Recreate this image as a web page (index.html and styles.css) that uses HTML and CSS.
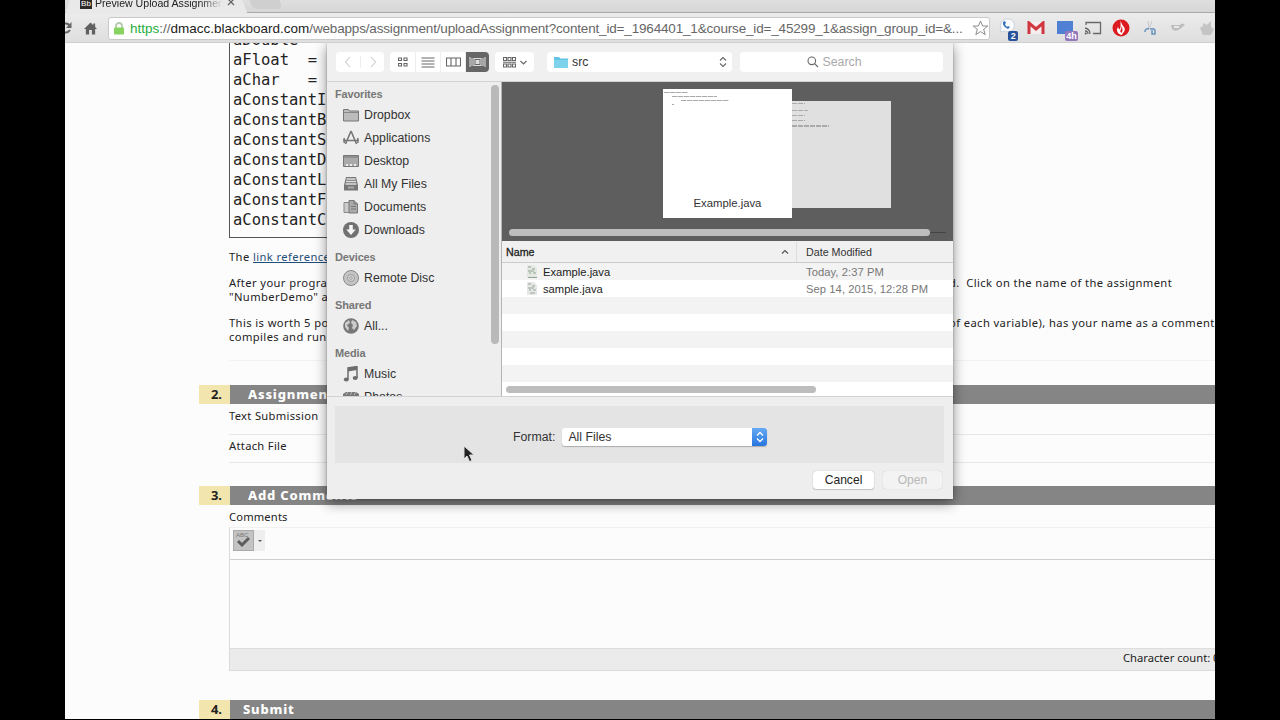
FILE: index.html
```html
<!DOCTYPE html>
<html lang="en">
<head>
  <meta charset="UTF-8" />
  <title>Preview Upload Assignment</title>
  <link rel="stylesheet" href="styles.css">
</head>
<body>
  <div class="screen">

    <!-- Browser chrome -->
    <header class="browser">
      <div class="tab-strip">
        <div class="tab">
          <span class="favicon">Bb</span>
          <span class="tab-title">Preview Upload Assignmen</span>
          <svg class="tab-close" width="8" height="8" viewBox="0 0 8 8"><path d="M1 1l6 6M7 1l-6 6"/></svg>
        </div>
        <div class="new-tab"></div>
      </div>
      <div class="toolbar">
        <svg class="reload" width="8" height="16" viewBox="0 0 8 16"><path d="M0 3.500Q4 3 5 7M0 12.500Q3 13 5 10" fill="none" stroke="#666" stroke-width="2"/><path d="M6.500 2v6H1z" fill="#666"/></svg>
        <svg class="home" width="13" height="13" viewBox="0 0 14 13"><path d="M7 0L0 7h2v6h3.500V8h3v5H12V7h2l-2-2V1h-2v2z" fill="#606060"/></svg>
        <div class="address">
          <svg class="lock" width="12" height="13" viewBox="0 0 12 13"><path d="M3 6V4a3 3 0 0 1 6 0v2" fill="none" stroke="#b5c9ac" stroke-width="1.800"/><rect x="1" y="5.500" width="10" height="7" rx="1" fill="#86d35f"/></svg>
          <span class="url"><span class="scheme">https</span>://<span class="host">dmacc.blackboard.com</span><span class="path">/webapps/assignment/uploadAssignment?content_id=_1964401_1&amp;course_id=_45299_1&amp;assign_group_id=&amp;...</span></span>
          <svg class="star" width="17" height="16" viewBox="0 0 17 16"><path d="M8.500 1l2.100 5h5.200l-4.100 3.400 1.500 5.200-4.700-3-4.700 3 1.500-5.200L1.200 6h5.200z" fill="#fff" stroke="#8b8b8b"/></svg>
        </div>
        <div class="extensions">
          <div class="ext"><svg width="20" height="20" viewBox="0 0 20 20"><path d="M8 1a7 6.500 0 1 1-2 12l-4 1 1-4A7 6.500 0 0 1 8 1z" fill="#f8fafc" stroke="#c9d2dc"/><path d="M5 4q-1 4 5 7l2-2-2-1-1 1Q7 7 7 6l1-1-1-2z" fill="#3674bd"/></svg><b class="badge">2</b></div>
          <div class="ext"><svg width="18" height="14" viewBox="0 0 18 14"><rect x="1" y="1" width="16" height="12" fill="#f6eeee"/><path d="M2 13V2l7 6 7-6v11" fill="none" stroke="#d0363d" stroke-width="3"/></svg></div>
          <div class="ext"><svg width="18" height="16" viewBox="0 0 18 16"><path d="M1 1h16v13H1z" fill="#4f80d4"/></svg><b class="badge violet">4h</b></div>
          <div class="ext"><svg width="18" height="14" viewBox="0 0 18 14"><path d="M2 4V1.500h14.500v11H9M1 7q5 1 5 6M1 10q3 0 3 3" fill="none" stroke="#696969" stroke-width="1.300"/><circle cx="1.700" cy="12.500" r="1" fill="#555"/></svg></div>
          <div class="ext"><svg width="18" height="18" viewBox="0 0 18 18"><circle cx="9" cy="9" r="8.500" fill="#dc1b20"/><path d="M8.500 2Q10 6 12 8q2 3-1 6-1 1-1 2-2 0-4-2-2-3 0-6 1 3 2 2 1-3 .5-8z" fill="#fff"/><path d="M9.500 7q2 4 0 7-2-1-1-3 1-1 1-4z" fill="#dc1b20"/></svg></div>
          <div class="ext"><svg width="14" height="16" viewBox="0 0 14 16"><path d="M5 1l1 8M9 1L6 9" stroke="#c4c8ce"/><path d="M6 9q-4-1-4 3M7 9q5-1 5 2v3H9v-4" fill="none" stroke="#6893c0" stroke-width="1.500"/></svg></div>
          <div class="ext"><svg width="16" height="12" viewBox="0 0 16 12"><path d="M1 3h9q2-3 5 0l-4 3q-5 5-9 1z" fill="#bdbdbd"/><path d="M4 4h5v2H4z" fill="#e8e8e8"/></svg></div>
          <div class="ext"><svg width="16" height="16" viewBox="0 0 16 16"><path d="M2 8l3-2V3l4 2 4-4v6l3 2-3 6H5z" fill="#c4c4c4"/></svg></div>
        </div>
      </div>
    </header>

    <!-- Assignment page -->
    <main class="page">
      <pre class="code">aDouble =
aFloat  =
aChar   =
aConstantI
aConstantB
aConstantS
aConstantD
aConstantL
aConstantF
aConstantC</pre>

      <p>The <a href="#">link referenced</a></p>
      <p>
        <span class="line"><span>After your progra</span><span class="rest">d.&nbsp; Click on the name of the assignment</span></span>
        <span class="line"><span>"NumberDemo" a</span></span>
      </p>
      <p>
        <span class="line"><span>This is worth 5 po</span><span class="rest">of each variable), has your name as a comment,</span></span>
        <span class="line"><span>compiles and run</span></span>
      </p>

      <section class="step step-submission">
        <h2><span class="num">2.</span><span class="step-title">Assignment</span></h2>
        <div class="field text-field">Text Submission</div>
        <div class="field file-field">Attach File</div>
      </section>

      <section class="step step-comments">
        <h2><span class="num">3.</span><span class="step-title">Add Comments</span></h2>
        <div class="label">Comments</div>
        <div class="editor">
          <div class="editor-bar">
            <span class="spell">
              <svg width="21" height="21" viewBox="0 0 21 21"><text x="3" y="7">ABC</text><path d="M5 11l4 4 7-7" fill="none" stroke="#5d5d5d" stroke-width="3"/></svg>
            </span>
            <span class="spell-menu"><i></i></span>
          </div>
          <div class="editor-text"></div>
          <div class="editor-foot">Character count: 0</div>
        </div>
      </section>

      <section class="step step-submit">
        <h2><span class="num">4.</span><span class="step-title">Submit</span></h2>
      </section>
    </main>

    <!-- Open file dialog -->
    <div class="dialog">
      <div class="dialog-bar">
        <div class="group nav">
          <span><svg width="8" height="12" viewBox="0 0 8 12"><path d="M6 1L1.500 6 6 11"/></svg></span>
          <span><svg width="8" height="12" viewBox="0 0 8 12"><path d="M2 1l4.500 5L2 11"/></svg></span>
        </div>
        <div class="group views">
          <span><svg width="10" height="10" viewBox="0 0 10 10"><path d="M.5 1h3v2.500h-3zM6 1h3v2.500H6zM.5 6.500h3V9h-3zM6 6.500h3V9H6z"/></svg></span>
          <span><svg width="14" height="11" viewBox="0 0 14 11"><path d="M.5 1h13M.5 4h13M.5 7h13M.5 10h13"/></svg></span>
          <span><svg width="15" height="10" viewBox="0 0 15 10"><path d="M.5 1h14v8H.5zM5 1v8M10 1v8"/></svg></span>
          <span class="active"><svg width="17" height="10" viewBox="0 0 17 10"><path d="M5 1.500h7v7H5zM1 0v10M3 1v8M14 1v8M16 0v10"/><path d="M6.500 3h4v4h-4z" fill="#ddd" stroke="none"/></svg></span>
        </div>
        <div class="group arrange">
          <svg width="13" height="11" viewBox="0 0 13 11"><path d="M.5 .5h3v3h-3zM5 .5h3v3H5zM9.500 .5h3v3h-3zM.5 7h3v3h-3zM5 7h3v3H5zM9.500 7h3v3h-3zM0 5.300h13"/></svg>
          <svg width="7" height="5" viewBox="0 0 7 5"><path d="M.5 1l3 3 3-3"/></svg>
        </div>
        <div class="group location">
          <svg class="folder" width="14" height="12" viewBox="0 0 14 12"><path d="M0 1h5l1.500 1.500H14V12H0z" fill="#63c3e2"/><path d="M0 4h14v8H0z" fill="#7dd2ec"/></svg>
          <span>src</span>
          <svg class="updown" width="8" height="12" viewBox="0 0 8 12"><path d="M1 4.500L4 1.500l3 3M1 7.500l3 3 3-3"/></svg>
        </div>
        <div class="group search">
          <svg width="12" height="12" viewBox="0 0 12 12"><circle cx="4.800" cy="4.800" r="3.800"/><path d="M7.600 7.600L11 11"/></svg>
          <span>Search</span>
        </div>
      </div>

      <div class="dialog-main">
        <nav class="sidebar">
          <div class="side-scroll"></div>
          <h3>Favorites</h3>
          <ul>
            <li><svg viewBox="0 0 16 16"><path d="M.5 2.500h5l1 1.500h9v10H.5z" fill="#bcbcbc" stroke="#777"/><path d="M1 5.500h14" stroke="#888"/></svg>Dropbox</li>
            <li><svg viewBox="0 0 16 16"><path d="M8 1L2.500 14M8 1l5.500 13M0 10.500h16M1 8q1 3 0 5M15 8q-1 3 0 5" fill="none" stroke="#777" stroke-width="1.600"/></svg>Applications</li>
            <li><svg viewBox="0 0 16 16"><path d="M.5 2.500h15v11H.5z" fill="#aaa" stroke="#777"/><path d="M1 4h14" stroke="#777"/><path d="M3 12h2M7 12h2M11 12h2" stroke="#eee" stroke-width="2"/></svg>Desktop</li>
            <li><svg viewBox="0 0 16 16"><path d="M3 1h10l2 8v5.500H1V9z" fill="#777"/><path d="M3.500 3h9M3 5.500h10M2.500 8h11" stroke="#ddd" stroke-width="1.500"/><path d="M5 10.500h6v2H5z" fill="#aaa"/></svg>All My Files</li>
            <li><svg viewBox="0 0 16 16"><path d="M1 3.500h7v10H1z" fill="#ccc" stroke="#888"/><path d="M6 1.500h5l3.500 3.500v9H6z" fill="#aaa" stroke="#777"/><path d="M11 1.500V5h3.500M8 7.500h5M8 10h5" fill="none" stroke="#777"/></svg>Documents</li>
            <li><svg viewBox="0 0 16 16"><circle cx="8" cy="8" r="8" fill="#717171"/><path d="M6.200 3h3.600v4.500h3L8 13 3.200 7.500h3z" fill="#f5f5f5"/></svg>Downloads</li>
          </ul>
          <h3>Devices</h3>
          <ul>
            <li><svg viewBox="0 0 16 16"><circle cx="8" cy="8" r="7.500" fill="#c4c4c4" stroke="#888"/><circle cx="8" cy="8" r="3.500" fill="#d8d8d8" stroke="#999"/><circle cx="8" cy="8" r="1.300" fill="#eee" stroke="#999"/></svg>Remote Disc</li>
          </ul>
          <h3>Shared</h3>
          <ul>
            <li><svg viewBox="0 0 16 16"><circle cx="8" cy="8" r="7.800" fill="#777"/><path d="M2 5l4-3 1 3-3 2 2 3-1 3-3-4zM9 2l4 2 1 4-3 4-2-2 1-3-2-2z" fill="#ccc"/></svg>All...</li>
          </ul>
          <h3>Media</h3>
          <ul>
            <li><svg viewBox="0 0 16 16"><path d="M5 13V2l9-1.500V12" fill="none" stroke="#6d6d6d" stroke-width="1.500"/><path d="M5 2l9-1.500V4L5 5.500z" fill="#6d6d6d"/><ellipse cx="3.300" cy="13.500" rx="2.500" ry="2" fill="#6d6d6d"/><ellipse cx="12.200" cy="12" rx="2.500" ry="2" fill="#6d6d6d"/></svg>Music</li>
            <li><svg viewBox="0 0 16 16"><path d="M0 5l3-2h10l3 2v9H0z" fill="#777"/><path d="M3 6l2-3M7 6l2-3M11 6l2-3" stroke="#bbb"/></svg>Photos</li>
          </ul>
        </nav>

        <div class="browser-pane">
          <div class="coverflow">
            <div class="cover">
              <div class="code-lines"><i></i><i></i><i></i><i></i></div>
              <span>Example.java</span>
            </div>
            <div class="cover back">
              <div class="code-lines"><i></i><i></i><i></i><i></i><i></i></div>
            </div>
            <div class="cover-scroll"></div>
          </div>
          <div class="files">
            <div class="row head">
              <span class="name">Name</span>
              <svg width="8" height="6" viewBox="0 0 8 6"><path d="M1 4.500l3-3 3 3" fill="none" stroke="#555" stroke-width="1.200"/></svg>
              <span class="date">Date Modified</span>
            </div>
            <div class="row">
              <svg class="file-icon" width="10" height="13" viewBox="0 0 10 13"><path d="M0 0h7l3 3v10H0z" fill="#e4e8e3"/><path d="M1 2h3M5 4h3M1 6h6M2 8h2M6 8h3M1 12.500h9" stroke="#91a38f"/></svg>
              <span class="name">Example.java</span><span class="date">Today, 2:37 PM</span>
            </div>
            <div class="row">
              <svg class="file-icon" width="10" height="13" viewBox="0 0 10 13"><path d="M0 0h7l3 3v10H0z" fill="#e6e8e6"/><path d="M1 2h3M5 4h3M1 6h6M2 8h2M6 8h3M3 11h5" stroke="#9aa39a"/></svg>
              <span class="name">sample.java</span><span class="date">Sep 14, 2015, 12:28 PM</span>
            </div>
            <div class="file-scroll"></div>
          </div>
        </div>
      </div>

      <div class="accessory">
        <label>Format:</label>
        <div class="select">All Files
          <span class="stepper"><svg width="8" height="12" viewBox="0 0 8 12"><path d="M1 4.500L4 1.500l3 3M1 7.500l3 3 3-3"/></svg></span>
        </div>
      </div>
      <div class="actions">
        <button class="btn">Cancel</button>
        <button class="btn" disabled>Open</button>
      </div>
    </div>

    <svg class="cursor" width="12" height="18" viewBox="0 0 12 18"><path d="M1 1v13l3-3 2.500 5.500 2.500-1L6.500 10H11z" fill="#222" stroke="#ddd"/></svg>
  </div>
</body>
</html>
```
FILE: styles.css
```css
* {
  box-sizing: border-box;
}

body {
  margin: 0;
  height: 720px;
  overflow: hidden;
  background: #000;
  font-family: "Liberation Sans", Arial, sans-serif;
}

svg {
  flex-shrink: 0;
}

.screen {
  position: relative;
  width: 1150px;
  height: 719px;
  margin-left: 65px;
  overflow: hidden;
  background: #fdfcfd;
}

/* Browser chrome */
.browser {
  position: relative;
  z-index: 3;
  height: 43px;
  background: #e6e6e6;
  border-bottom: 1px solid #cfcfcf;
  overflow: hidden;
}

.tab-strip {
  display: flex;
  height: 13px;
  background: linear-gradient(#dfdfdf, #d6d6d6);
  border-bottom: 1px solid #a9a9a9;
}

.tab {
  display: flex;
  align-items: center;
  width: 182px;
  height: 14px;
  padding: 0 0 9px 15px;
  background: #e9e9e9;
  clip-path: polygon(5px 0, 177px 0, 183px 14px, 0 14px);
}

.favicon {
  width: 12px;
  height: 12px;
  margin-right: 3px;
  background: #2d2927;
  color: #fff;
  font-size: 8px;
  line-height: 13px;
  text-align: center;
}

.tab-title {
  width: 128px;
  overflow: hidden;
  font-size: 10.6px;
  line-height: 14px;
  white-space: nowrap;
  color: #222;
  -webkit-mask-image: linear-gradient(90deg, #000 105px, transparent);
  mask-image: linear-gradient(90deg, #000 105px, transparent);
}

.tab-close {
  margin: -2px 0 0 4px;
  stroke: #666;
  stroke-width: 1.3;
}

.new-tab {
  width: 30px;
  height: 9px;
  margin-left: 4px;
  background: #cfcfcf;
  border-radius: 0 0 5px 5px;
  transform: skewX(20deg);
}

.toolbar {
  display: flex;
  align-items: center;
  height: 30px;
  background: linear-gradient(#ececec, #dedede);
}

.home {
  margin-left: 11px;
}

.address {
  display: flex;
  align-items: center;
  width: 883px;
  height: 23px;
  margin-left: 11px;
  padding: 0 0 0 4px;
  background: #fff;
  border: 1px solid #c9c9c9;
  border-radius: 3px;
}

.url {
  width: 847px;
  padding-left: 5px;
  font-size: 13.5px;
  white-space: nowrap;
  color: #666;
}

.scheme {
  color: #27ad3c;
}

.host {
  color: #222;
}

.path {
  letter-spacing: -.17px;
}

.extensions {
  display: flex;
  align-items: center;
  margin-left: 4px;
}

.ext {
  position: relative;
  display: flex;
  align-items: center;
  justify-content: center;
  width: 28.3px;
  height: 26px;
}

.badge {
  position: absolute;
  right: 4px;
  bottom: 0;
  width: 10px;
  height: 10px;
  background: #28539b;
  color: #fff;
  border-radius: 2px;
  font-size: 9px;
  line-height: 10px;
  text-align: center;
}

.badge.violet {
  right: 1px;
  width: 13px;
  background: #9478bd;
}

/* Assignment page */
.page {
  width: 1100px;
  padding-left: 164px;
  font-family: "Noto Sans", "Open Sans", sans-serif;
  font-size: 11.2px;
  line-height: 14px;
  color: #222;
}

.code {
  display: flex;
  flex-direction: column;
  justify-content: flex-end;
  width: 600px;
  height: 195px;
  margin: 0 0 12px;
  padding: 0 0 7px 3px;
  overflow: hidden;
  border: solid #555;
  border-width: 0 0 1px 1px;
  font-family: "DejaVu Sans Mono", monospace;
  font-size: 15.5px;
  line-height: 20px;
}

.page p {
  margin: 0 0 12px;
  letter-spacing: .4px;
}

.page a {
  color: #1f4f78;
}

.line {
  display: flex;
  white-space: nowrap;
}

.line span:first-child {
  flex: 0 0 720px;
}

.step h2 {
  display: flex;
  width: 1100px;
  height: 19px;
  margin: 0 0 0 -30px;
  background: #858585;
  color: #fff;
  font-size: 13px;
  font-weight: 800;
  line-height: 18px;
  letter-spacing: .8px;
}

.num {
  width: 31px;
  padding-right: 8px;
  background: #f2e5ae;
  color: #222;
  font-weight: 700;
  letter-spacing: 0;
  text-align: right;
}

.step-title {
  padding-left: 18px;
}

.step-submission {
  margin-top: 28px;
}

.step-submission::before {
  content: "";
  display: block;
  width: 1000px;
  height: 24px;
  margin-top: -12px;
  border-top: 1px solid #f3f3f3;
}

.field {
  width: 1000px;
  border-bottom: 1px solid #e8e8e8;
  letter-spacing: .3px;
}

.text-field {
  height: 31px;
  padding-top: 5px;
}

.file-field {
  height: 28px;
  padding-top: 4px;
}

.step-comments {
  margin-top: 23px;
}

.label {
  padding: 5px 0 3px;
  letter-spacing: .15px;
}

.editor {
  width: 1000px;
  border: 1px solid #dadada;
  border-top-color: #f0f0f0;
}

.editor-bar {
  display: flex;
  height: 32px;
  padding: 2px 3px;
  border-bottom: 1px solid #d0d0d0;
}

.spell {
  width: 21px;
  height: 21px;
  background: #c3c3c3;
  border: 1px solid #aaa;
}

.spell svg {
  display: block;
  margin: -1px;
}

.spell text {
  font: 6px "Liberation Sans", sans-serif;
  fill: #777;
}

.spell-menu {
  display: flex;
  align-items: center;
  justify-content: center;
  width: 11px;
  height: 21px;
  background: #eee;
}

.spell-menu i {
  border: 2.5px solid transparent;
  border-top-color: #555;
  border-bottom: 0;
}

.editor-text {
  height: 88px;
}

.editor-foot {
  height: 22px;
  padding: 2px 0 0 893px;
  background: #ebebeb;
  border-top: 1px solid #ddd;
  white-space: nowrap;
}

.step-submit {
  margin-top: 29px;
}

.step-submit .step-title {
  padding-left: 13px;
}

/* Open file dialog */
.dialog {
  position: absolute;
  z-index: 2;
  left: 262px;
  top: 43px;
  width: 626px;
  height: 456px;
  background: #eee;
  box-shadow: 0 4px 12px rgba(0, 0, 0, .45), 0 0 2px rgba(0, 0, 0, .3);
  color: #333;
  font-size: 12.3px;
}

.dialog-bar {
  display: flex;
  align-items: center;
  height: 39px;
  padding: 0 9px;
  border-bottom: 1px solid #d4d4d4;
  background: #f0f0f0;
}

.group {
  display: flex;
  align-items: center;
  height: 20px;
  background: #fff;
  border-radius: 4px;
}

.group svg {
  fill: none;
  stroke: #666;
  stroke-width: 1.1;
}

.group .folder {
  stroke: none;
}

.group > span {
  display: flex;
  align-items: center;
  justify-content: center;
}

.nav > span {
  width: 24px;
}

.nav svg {
  stroke: #ccc;
}

.nav > span + span,
.views > span + span {
  border-left: 1px solid #eee;
}

.views {
  margin-left: 6px;
  overflow: hidden;
}

.views > span {
  width: 25px;
  height: 20px;
}

.views .active {
  width: 24px;
  background: #666;
}

.views .active svg {
  stroke: #ddd;
}

.arrange {
  width: 39px;
  margin-left: 6px;
  justify-content: center;
  gap: 4px;
}

.location {
  width: 185px;
  margin-left: 13px;
  padding: 0 5px 0 7px;
}

.location span {
  margin-left: 4px;
}

.updown {
  margin-left: auto;
}

.search {
  width: 203px;
  margin-left: 8px;
  padding-right: 15px;
  justify-content: center;
  gap: 4px;
  color: #aaa;
}

.dialog-main {
  display: flex;
  height: 315px;
  border-bottom: 1px solid #d2d2d2;
}

.sidebar {
  position: relative;
  width: 175px;
  padding: 4px 8px 0;
  overflow: hidden;
  border-right: 1px solid #b4b4b4;
}

.side-scroll {
  position: absolute;
  right: 2px;
  top: 3px;
  width: 8px;
  height: 259px;
  background: #b9b9b9;
  border-radius: 4px;
}

.sidebar h3 {
  margin: 0;
  color: #777;
  font-size: 11px;
  line-height: 17px;
  height: 18px;
  letter-spacing: -.15px;
}

.sidebar ul {
  margin: 0 0 7px;
  padding: 0;
  list-style: none;
}

.sidebar li {
  display: flex;
  align-items: center;
  height: 23px;
  padding: 0 0 2px 8px;
}

.sidebar li svg {
  width: 16px;
  height: 16px;
  margin-right: 5px;
}

.browser-pane {
  width: 451px;
}

.coverflow {
  position: relative;
  display: flex;
  align-items: flex-start;
  height: 159px;
  padding: 7px 0 0 161px;
  background: #5e5e5e;
}

.cover {
  display: flex;
  flex-direction: column;
  justify-content: space-between;
  width: 129px;
  height: 129px;
  padding-bottom: 9px;
  background: #fff;
  font-size: 11.3px;
  text-align: center;
}

.cover.back {
  width: 99px;
  height: 107px;
  margin-top: 12px;
  background: #e0e0e0;
}

.code-lines {
  padding: 3px 1px;
}

.code-lines i {
  display: block;
  width: 24px;
  height: 1px;
  margin-bottom: 3px;
  background: repeating-linear-gradient(90deg, #aaa 0 5px, #ddd 5px 6px);
}

.code-lines i:nth-child(2) {
  width: 45px;
  margin-left: 8px;
}

.code-lines i:nth-child(3) {
  width: 48px;
  margin-left: 17px;
}

.code-lines i:nth-child(4) {
  width: 2px;
  margin-left: 8px;
}

.back .code-lines {
  padding: 2px 0;
}

.back .code-lines i {
  width: 13px;
  margin: 0 0 4px;
}

.back .code-lines i:nth-child(1) {
  margin-bottom: 6px;
}

.back .code-lines i:nth-child(2) {
  width: 16px;
}

.back .code-lines i:nth-child(5) {
  width: 37px;
  height: 2px;
}

.cover-scroll {
  position: absolute;
  left: 7px;
  bottom: 5px;
  width: 421px;
  height: 7px;
  background: #bdbdbd;
  border-radius: 4px;
}

.cover-scroll::after {
  content: "";
  position: absolute;
  left: 421px;
  top: 3px;
  width: 16px;
  height: 1px;
  background: #444;
}

.files {
  position: relative;
  height: 155px;
  background: repeating-linear-gradient(#f3f3f3 0 17px, #fff 17px 34px) 0 22px;
}

.row {
  display: flex;
  align-items: center;
  height: 17px;
  padding-left: 25px;
  font-size: 11.2px;
}

.file-icon {
  margin-right: 6px;
}

.name {
  width: 263px;
  color: #222;
}

.date {
  color: #777;
  letter-spacing: .07px;
}

.head {
  height: 22px;
  padding-left: 4px;
  background: #f0f0f0;
  border-bottom: 1px solid #ccc;
  font-size: 10.7px;
}

.head .name {
  width: 275px;
  -webkit-text-stroke: .3px;
}

.head .date {
  margin-left: 7px;
  padding-left: 9px;
  border-left: 1px solid #ddd;
  color: #333;
  letter-spacing: 0;
  line-height: 20px;
}

.file-scroll {
  position: absolute;
  left: 4px;
  bottom: 3px;
  width: 310px;
  height: 7px;
  background: #bdbdbd;
  border-radius: 4px;
}

.accessory {
  display: flex;
  align-items: center;
  height: 57px;
  margin: 9px 9px 0 8px;
  padding: 4px 0 0 178px;
  background: #e4e4e4;
}

.select {
  display: flex;
  align-items: center;
  justify-content: space-between;
  width: 205px;
  height: 18px;
  margin-left: 7px;
  padding-left: 6px;
  background: #fff;
  border-radius: 3px;
  box-shadow: 0 1px 1px rgba(0, 0, 0, .25);
}

.stepper {
  display: flex;
  align-items: center;
  justify-content: center;
  width: 15px;
  height: 18px;
  background: linear-gradient(#65a9f4, #2775df);
  border-radius: 0 3px 3px 0;
}

.stepper svg {
  fill: none;
  stroke: #fff;
  stroke-width: 1.3;
}

.actions {
  display: flex;
  justify-content: flex-end;
  gap: 9px;
  padding: 8px 11px;
}

.btn {
  width: 61px;
  height: 18px;
  padding: 0;
  border: 0;
  border-radius: 3px;
  background: #fff;
  box-shadow: 0 0 1px rgba(0, 0, 0, .4), 0 1px 1px rgba(0, 0, 0, .15);
  color: #222;
  font: 12.1px "Liberation Sans", Arial, sans-serif;
}

.btn:disabled {
  width: 59px;
  background: #f3f3f3;
  box-shadow: 0 0 1px rgba(0, 0, 0, .25);
  color: #b8b8b8;
}

.cursor {
  position: absolute;
  z-index: 4;
  left: 398px;
  top: 445px;
}
```
